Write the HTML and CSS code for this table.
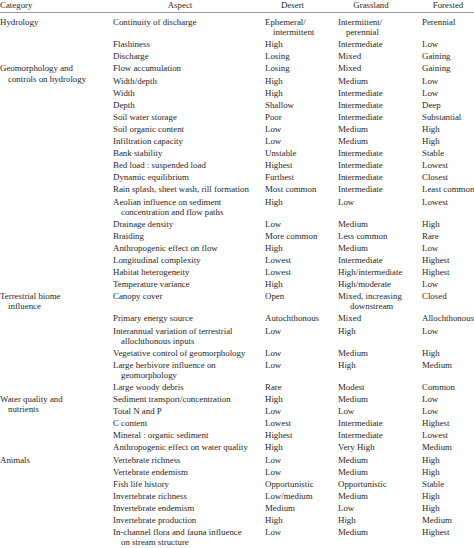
FILE: index.html
```html
<!DOCTYPE html>
<html lang="en">
<head>
<meta charset="utf-8">
<title>Table</title>
<link rel="stylesheet" href="styles.css">
</head>
<body>
<table class="tbl">
<colgroup>
<col class="c-cat"><col class="c-asp"><col class="c-des"><col class="c-gra"><col class="c-for">
</colgroup>
<thead>
<tr><th class="h-left">Category</th><th>Aspect</th><th>Desert</th><th>Grassland</th><th>Forested</th></tr>
</thead>
<tbody>
<tr class="first"><td rowspan="3">Hydrology</td><td>Continuity of discharge</td><td>Ephemeral/<span class="cont">intermittent</span></td><td>Intermittent/<span class="cont">perennial</span></td><td>Perennial</td></tr>
<tr><td>Flashiness</td><td>High</td><td>Intermediate</td><td>Low</td></tr>
<tr><td>Discharge</td><td>Losing</td><td>Mixed</td><td>Gaining</td></tr>
<tr><td rowspan="18">Geomorphology and<span class="cont">controls on hydrology</span></td><td>Flow accumulation</td><td>Losing</td><td>Mixed</td><td>Gaining</td></tr>
<tr><td>Width/depth</td><td>High</td><td>Medium</td><td>Low</td></tr>
<tr><td>Width</td><td>High</td><td>Intermediate</td><td>Low</td></tr>
<tr><td>Depth</td><td>Shallow</td><td>Intermediate</td><td>Deep</td></tr>
<tr><td>Soil water storage</td><td>Poor</td><td>Intermediate</td><td>Substantial</td></tr>
<tr><td>Soil organic content</td><td>Low</td><td>Medium</td><td>High</td></tr>
<tr><td>Infiltration capacity</td><td>Low</td><td>Medium</td><td>High</td></tr>
<tr><td>Bank stability</td><td>Unstable</td><td>Intermediate</td><td>Stable</td></tr>
<tr><td>Bed load : suspended load</td><td>Highest</td><td>Intermediate</td><td>Lowest</td></tr>
<tr><td>Dynamic equilibrium</td><td>Furthest</td><td>Intermediate</td><td>Closest</td></tr>
<tr><td>Rain splash, sheet wash, rill formation</td><td>Most common</td><td>Intermediate</td><td>Least common</td></tr>
<tr><td>Aeolian influence on sediment<span class="cont">concentration and flow paths</span></td><td>High</td><td>Low</td><td>Lowest</td></tr>
<tr><td>Drainage density</td><td>Low</td><td>Medium</td><td>High</td></tr>
<tr><td>Braiding</td><td>More common</td><td>Less common</td><td>Rare</td></tr>
<tr><td>Anthropogenic effect on flow</td><td>High</td><td>Medium</td><td>Low</td></tr>
<tr><td>Longitudinal complexity</td><td>Lowest</td><td>Intermediate</td><td>Highest</td></tr>
<tr><td>Habitat heterogeneity</td><td>Lowest</td><td>High/intermediate</td><td>Highest</td></tr>
<tr><td>Temperature variance</td><td>High</td><td>High/moderate</td><td>Low</td></tr>
<tr><td rowspan="6">Terrestrial biome<span class="cont">influence</span></td><td>Canopy cover</td><td>Open</td><td>Mixed, increasing<span class="cont wide">downstream</span></td><td>Closed</td></tr>
<tr><td>Primary energy source</td><td>Autochthonous</td><td>Mixed</td><td>Allochthonous</td></tr>
<tr><td>Interannual variation of terrestrial<span class="cont">allochthonous inputs</span></td><td>Low</td><td>High</td><td>Low</td></tr>
<tr><td>Vegetative control of geomorphology</td><td>Low</td><td>Medium</td><td>High</td></tr>
<tr><td>Large herbivore influence on<span class="cont">geomorphology</span></td><td>Low</td><td>High</td><td>Medium</td></tr>
<tr><td>Large woody debris</td><td>Rare</td><td>Modest</td><td>Common</td></tr>
<tr><td rowspan="5">Water quality and<span class="cont">nutrients</span></td><td>Sediment transport/concentration</td><td>High</td><td>Medium</td><td>Low</td></tr>
<tr><td>Total N and P</td><td>Low</td><td>Low</td><td>Low</td></tr>
<tr><td>C content</td><td>Lowest</td><td>Intermediate</td><td>Highest</td></tr>
<tr><td>Mineral : organic sediment</td><td>Highest</td><td>Intermediate</td><td>Lowest</td></tr>
<tr><td>Anthropogenic effect on water quality</td><td>High</td><td>Very High</td><td>Medium</td></tr>
<tr><td rowspan="7">Animals</td><td>Vertebrate richness</td><td>Low</td><td>Medium</td><td>High</td></tr>
<tr><td>Vertebrate endemism</td><td>Low</td><td>Medium</td><td>High</td></tr>
<tr><td>Fish life history</td><td>Opportunistic</td><td>Opportunistic</td><td>Stable</td></tr>
<tr><td>Invertebrate richness</td><td>Low/medium</td><td>Medium</td><td>High</td></tr>
<tr><td>Invertebrate endemism</td><td>Medium</td><td>Low</td><td>High</td></tr>
<tr><td>Invertebrate production</td><td>High</td><td>High</td><td>Medium</td></tr>
<tr><td>In-channel flora and fauna influence<span class="cont">on stream structure</span></td><td>Low</td><td>Medium</td><td>Highest</td></tr>
</tbody>
</table>
</body>
</html>
```

FILE: styles.css
```css
html, body {
  margin: 0;
  padding: 0;
  background: #ffffff;
  overflow: hidden;
}

body {
  width: 474px;
  height: 548px;
}

.tbl {
  width: 492px;
  table-layout: fixed;
  border-collapse: separate;
  border-spacing: 0;
  font-family: "Liberation Serif", "Times New Roman", serif;
  font-size: 8.85px;
  line-height: 10.1px;
  color: #1f1f1f;
}

.c-cat { width: 113px; }
.c-asp { width: 152px; }
.c-des { width: 73px; }
.c-gra { width: 84px; }
.c-for { width: 70px; }

.tbl th {
  font-weight: normal;
  text-align: center;
  padding: 0 18px 2px 0;
  border-bottom: 1px solid #9c9c9c;
  white-space: nowrap;
}

.tbl th.h-left {
  text-align: left;
  padding-left: 0;
}

.tbl td {
  vertical-align: top;
  text-align: left;
  padding: 1px 18px 1px 0;
  white-space: nowrap;
}

.tbl tr.first td {
  padding-top: 4px;
}

.cont {
  display: block;
  padding-left: 8px;
}

.cont.wide {
  padding-left: 12px;
}
```
